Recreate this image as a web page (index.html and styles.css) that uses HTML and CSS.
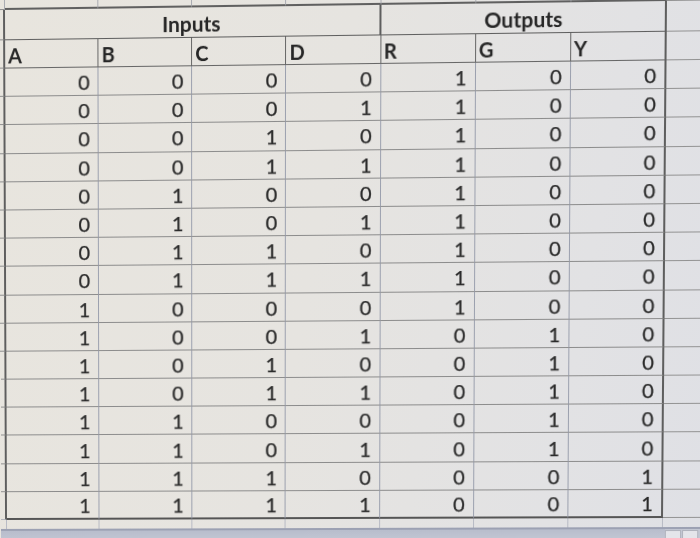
FILE: index.html
```html
<!DOCTYPE html>
<html lang="en">
<head>
<meta charset="utf-8">
<title>Truth table</title>
<link rel="stylesheet" href="styles.css">
</head>
<body>
<div class="sheet">
  <div class="grid">
    <div class="c tl"></div><div class="c t"></div><div class="c t"></div><div class="c t"></div><div class="c t"></div><div class="c t"></div><div class="c t"></div><div class="c t"></div><div class="c tr"></div>

    <div class="c el"></div><div class="c grp in">Inputs</div><div class="c grp out">Outputs</div><div class="c er"></div>

    <div class="c el"></div><div class="c h">A</div><div class="c h">B</div><div class="c h">C</div><div class="c h">D</div><div class="c h">R</div><div class="c h">G</div><div class="c h y">Y</div><div class="c er"></div>

    <div class="c el"></div><div class="c d">0</div><div class="c d">0</div><div class="c d">0</div><div class="c d">0</div><div class="c d">1</div><div class="c d">0</div><div class="c d y">0</div><div class="c er"></div>
    <div class="c el"></div><div class="c d">0</div><div class="c d">0</div><div class="c d">0</div><div class="c d">1</div><div class="c d">1</div><div class="c d">0</div><div class="c d y">0</div><div class="c er"></div>
    <div class="c el"></div><div class="c d">0</div><div class="c d">0</div><div class="c d">1</div><div class="c d">0</div><div class="c d">1</div><div class="c d">0</div><div class="c d y">0</div><div class="c er"></div>
    <div class="c el"></div><div class="c d">0</div><div class="c d">0</div><div class="c d">1</div><div class="c d">1</div><div class="c d">1</div><div class="c d">0</div><div class="c d y">0</div><div class="c er"></div>
    <div class="c el"></div><div class="c d">0</div><div class="c d">1</div><div class="c d">0</div><div class="c d">0</div><div class="c d">1</div><div class="c d">0</div><div class="c d y">0</div><div class="c er"></div>
    <div class="c el"></div><div class="c d">0</div><div class="c d">1</div><div class="c d">0</div><div class="c d">1</div><div class="c d">1</div><div class="c d">0</div><div class="c d y">0</div><div class="c er"></div>
    <div class="c el"></div><div class="c d">0</div><div class="c d">1</div><div class="c d">1</div><div class="c d">0</div><div class="c d">1</div><div class="c d">0</div><div class="c d y">0</div><div class="c er"></div>
    <div class="c el"></div><div class="c d">0</div><div class="c d">1</div><div class="c d">1</div><div class="c d">1</div><div class="c d">1</div><div class="c d">0</div><div class="c d y">0</div><div class="c er"></div>
    <div class="c el"></div><div class="c d">1</div><div class="c d">0</div><div class="c d">0</div><div class="c d">0</div><div class="c d">1</div><div class="c d">0</div><div class="c d y">0</div><div class="c er"></div>
    <div class="c el"></div><div class="c d">1</div><div class="c d">0</div><div class="c d">0</div><div class="c d">1</div><div class="c d">0</div><div class="c d">1</div><div class="c d y">0</div><div class="c er"></div>
    <div class="c el"></div><div class="c d">1</div><div class="c d">0</div><div class="c d">1</div><div class="c d">0</div><div class="c d">0</div><div class="c d">1</div><div class="c d y">0</div><div class="c er"></div>
    <div class="c el"></div><div class="c d">1</div><div class="c d">0</div><div class="c d">1</div><div class="c d">1</div><div class="c d">0</div><div class="c d">1</div><div class="c d y">0</div><div class="c er"></div>
    <div class="c el"></div><div class="c d">1</div><div class="c d">1</div><div class="c d">0</div><div class="c d">0</div><div class="c d">0</div><div class="c d">1</div><div class="c d y">0</div><div class="c er"></div>
    <div class="c el"></div><div class="c d">1</div><div class="c d">1</div><div class="c d">0</div><div class="c d">1</div><div class="c d">0</div><div class="c d">1</div><div class="c d y">0</div><div class="c er"></div>
    <div class="c el"></div><div class="c d">1</div><div class="c d">1</div><div class="c d">1</div><div class="c d">0</div><div class="c d">0</div><div class="c d">0</div><div class="c d y">1</div><div class="c er"></div>
    <div class="c el lr"></div><div class="c d lr">1</div><div class="c d lr">1</div><div class="c d lr">1</div><div class="c d lr">1</div><div class="c d lr">0</div><div class="c d lr">0</div><div class="c d y lr">1</div><div class="c er"></div>

    <div class="c bl"></div><div class="c b"></div><div class="c b"></div><div class="c b"></div><div class="c b"></div><div class="c b"></div><div class="c b"></div><div class="c b"></div><div class="c br"></div>
  </div>
  <div class="band">
    <div class="band-fill"></div>
    <div class="band-btn"></div>
    <div class="band-btn"></div>
  </div>
</div>
</body>
</html>
```

FILE: styles.css
```css
html, body {
  margin: 0;
  padding: 0;
  width: 700px;
  height: 538px;
  overflow: hidden;
}

body {
  background: linear-gradient(100deg, #e8e5de 0%, #e6e4e0 45%, #e2e2e4 80%, #dfe0e5 100%);
  font-family: Lato, "Open Sans", "Liberation Sans", sans-serif;
  color: #2a2a2a;
}

.sheet {
  width: 725px;
  transform-origin: 0 0;
  transform: matrix3d(0.990883, -0.013677, 0, -0.000020493, 0.004054, 1.011224, 0, 0.000017808, 0, 0, 1, 0, -0.98584, -0.03018, 0, 0.999945);
}

.grid {
  display: grid;
  grid-template-columns: 6px repeat(7, 94.14px) 60px;
  grid-template-rows: 10px 30px 28px repeat(16, 28.1875px) 9px;
}

.c {
  box-sizing: border-box;
  display: flex;
  align-items: center;
  min-width: 0;
}

/* top strip above the table */
.tl, .t {
  border-right: 1px solid #a9abb1;
  border-bottom: 2px solid #606060;
}
.tl {
  border-bottom: 1px solid #8e8e8e;
}
.tr {
  border-bottom: 1px solid #8e8e8e;
}

/* left and right margins */
.el {
  border-right: 2px solid #5e5e5e;
  border-bottom: 1px solid #909090;
}
.el.lr {
  border-bottom: 1px solid #b4b6bc;
}
.er {
  border-bottom: 1px solid #939393;
}

/* group headings */
.grp {
  justify-content: center;
  font-weight: 700;
  font-size: 21px;
  color: #262626;
  border-right: 2px solid #5e5e5e;
  border-bottom: 1px solid #5e5e5e;
  padding-top: 1px;
}
.in {
  grid-column: span 4;
}
.out {
  grid-column: span 3;
  padding-left: 2px;
}

/* column headings */
.h {
  font-weight: 700;
  font-size: 20px;
  color: #262626;
  padding-left: 3px;
  padding-top: 3px;
  border-right: 1px solid #666666;
  border-bottom: 1px solid #666666;
}
.h.y {
  border-right: 2px solid #5e5e5e;
}

/* data cells */
.d {
  justify-content: flex-end;
  padding-right: 8px;
  padding-top: 1px;
  font-size: 20px;
  -webkit-text-stroke: 0.25px #2a2a2a;
  border-right: 1px solid #9ba0ae;
  border-bottom: 1px solid #8c8c8c;
}
.d.y {
  border-right: 2px solid #5e5e5e;
}
.d.lr {
  border-bottom: 2px solid #555555;
}

/* strip below the table */
.bl, .b {
  border-right: 1px solid #b7bac4;
}

.band {
  display: flex;
  height: 14px;
  border-top: 2px solid #9ca1b3;
  background: #c3c7d3;
}
.band-fill {
  flex: 0 0 667px;
  background: linear-gradient(180deg, #b8bdcc 0%, #c6cad6 100%);
}
.band-btn {
  flex: 0 0 16px;
  margin: 1px 1px 0 0;
  background: #e4e5ea;
  border: 1px solid #b0b3bd;
  box-sizing: border-box;
}
```
